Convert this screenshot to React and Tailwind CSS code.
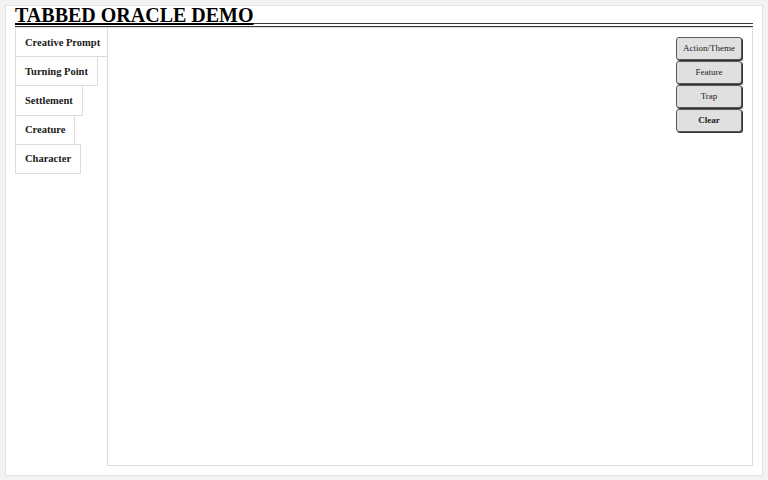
const tabs = ["Creative Prompt", "Turning Point", "Settlement", "Creature", "Character"];

const buttons = [
  { label: "Action/Theme" },
  { label: "Feature" },
  { label: "Trap" },
  { label: "Clear", bold: true },
];

export default function App() {
  return (
    <div className="min-h-screen bg-[#f2f2f2] p-[5px] font-['Liberation_Serif',serif] text-[#1a1a1a]">
      <div className="flex h-[471px] flex-col border border-[#e4e4e4] bg-white px-[9px] pt-[2px] pb-[9px]">
        <h1 className="border-b-[4px] border-double border-[#3a3a3a] text-[20px] font-bold leading-[15px] text-black">
          <span className="underline decoration-2 underline-offset-[1px]">TABBED ORACLE DEMO</span>
        </h1>

        <div className="flex min-h-0 flex-1">
          <nav className="flex w-[92px] shrink-0 flex-col items-start overflow-hidden">
            {tabs.map((t, i) => (
              <div
                key={t}
                className={`flex h-[30.2px] shrink-0 items-center whitespace-nowrap border border-[#dcdcdc] bg-white px-[9px] pt-px text-[10.5px] font-bold ${
                  i > 0 ? "-mt-px" : ""
                }`}
              >
                {t}
              </div>
            ))}
          </nav>

          <main className="flex flex-1 justify-end border border-[#dcdcdc] bg-white p-[9px] pr-[10px]">
            <div className="flex w-[66px] flex-col gap-px">
              {buttons.map((b) => (
                <button
                  key={b.label}
                  className={`flex h-[23px] items-center justify-center rounded-[3px] border border-[#5a5a5a] bg-[#e0e0e0] text-[9px] text-[#222] shadow-[1px_1px_0_#333] ${
                    b.bold ? "font-bold" : ""
                  }`}
                >
                  {b.label}
                </button>
              ))}
            </div>
          </main>
        </div>
      </div>
    </div>
  );
}
